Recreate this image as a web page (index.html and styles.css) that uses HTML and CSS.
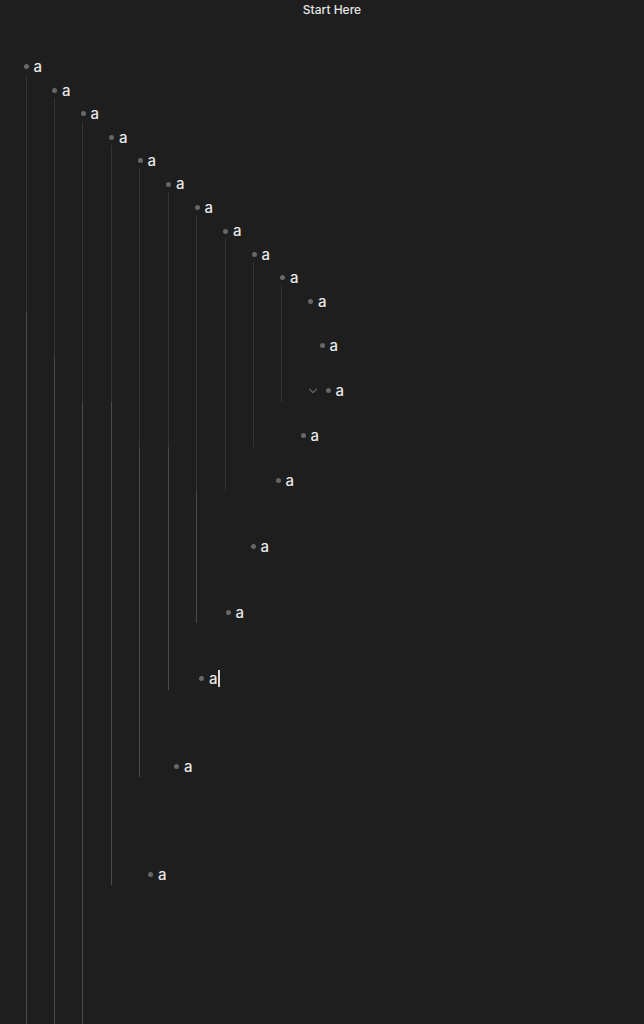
FILE: index.html
```html
<!DOCTYPE html>
<html lang="en">
<head>
<meta charset="utf-8">
<title>Start Here</title>
<link rel="stylesheet" href="styles.css">
</head>
<body>
<header class="titlebar"><span class="title">Start Here</span></header>
<main class="outline">
  <div class="guides">
    <div class="guide" style="--top:55px;--len:1100px;--split:237px"></div>
    <div class="guide" style="--top:78px;--len:1100px;--split:259px"></div>
    <div class="guide" style="--top:102px;--len:1100px;--split:280px"></div>
    <div class="guide" style="--top:125px;--len:740px;--split:257px"></div>
    <div class="guide" style="--top:148px;--len:609px;--split:279px"></div>
    <div class="guide" style="--top:172px;--len:498px;--split:255px"></div>
    <div class="guide" style="--top:195px;--len:408px;--split:276px"></div>
    <div class="guide" style="--top:218px;--len:253px;--split:253px"></div>
    <div class="guide" style="--top:242px;--len:185px;--split:185px"></div>
    <div class="guide" style="--top:265px;--len:117px;--split:117px"></div>
  </div>
  <div class="rows">
    <div class="row" style="--x:26px"><span class="bullet"></span><span class="text">a</span></div>
    <div class="row" style="--x:54.5px"><span class="bullet"></span><span class="text">a</span></div>
    <div class="row" style="--x:83px"><span class="bullet"></span><span class="text">a</span></div>
    <div class="row" style="--x:111.5px"><span class="bullet"></span><span class="text">a</span></div>
    <div class="row" style="--x:140px"><span class="bullet"></span><span class="text">a</span></div>
    <div class="row" style="--x:168.5px"><span class="bullet"></span><span class="text">a</span></div>
    <div class="row" style="--x:197px"><span class="bullet"></span><span class="text">a</span></div>
    <div class="row" style="--x:225.5px"><span class="bullet"></span><span class="text">a</span></div>
    <div class="row" style="--x:254px"><span class="bullet"></span><span class="text">a</span></div>
    <div class="row" style="--x:282.5px"><span class="bullet"></span><span class="text">a</span></div>
    <div class="row" style="--x:310.5px"><span class="bullet"></span><span class="text">a</span></div>
    <div class="row" style="--x:322px;--gap:21.05px"><span class="bullet"></span><span class="text">a</span></div>
    <div class="row" style="--x:328px;--gap:21.55px"><svg class="chevron" viewBox="0 0 10 10" width="10" height="10"><path d="M1.5 3.2 L5 6.7 L8.5 3.2" fill="none" stroke="#6b6b6b" stroke-width="1.2" stroke-linecap="round" stroke-linejoin="round"/></svg><span class="bullet"></span><span class="text">a</span></div>
    <div class="row" style="--x:303px;--gap:21.55px"><span class="bullet"></span><span class="text">a</span></div>
    <div class="row" style="--x:278px;--gap:21.55px"><span class="bullet"></span><span class="text">a</span></div>
    <div class="row" style="--x:253px;--gap:42.55px"><span class="bullet"></span><span class="text">a</span></div>
    <div class="row" style="--x:228px;--gap:42.55px"><span class="bullet"></span><span class="text">a</span></div>
    <div class="row" style="--x:201.5px;--gap:42.55px"><span class="bullet"></span><span class="text">a</span><span class="cursor"></span></div>
    <div class="row" style="--x:176.5px;--gap:64.55px"><span class="bullet"></span><span class="text">a</span></div>
    <div class="row" style="--x:150.5px;--gap:84.55px"><span class="bullet"></span><span class="text">a</span></div>
    <div class="row" style="--x:126px;--gap:132.55px"><span class="bullet"></span><span class="text">a</span></div>
  </div>
</main>
</body>
</html>
```
FILE: styles.css
```css
html, body {
  margin: 0;
  padding: 0;
  height: 100%;
  background: #1e1e1e;
  overflow: hidden;
}

body {
  font-family: Inter, "Noto Sans", sans-serif;
  color: #dadada;
}

.titlebar {
  height: 20px;
  display: flex;
  align-items: center;
  justify-content: center;
  padding-left: 20px;
}

.title {
  font-size: 12px;
  line-height: 20px;
  font-weight: 500;
  color: #e4e4e4;
}

.outline {
  display: grid;
}

.guides,
.rows {
  grid-area: 1 / 1;
}

.guides {
  display: flex;
  align-items: flex-start;
  gap: 27.45px;
  padding-left: 25.5px;
}

.guide {
  width: 1px;
  margin-top: var(--top);
  height: var(--len);
  background: linear-gradient(to bottom, #343434 var(--split), #4b4b4b var(--split));
}

.rows {
  display: flex;
  flex-direction: column;
  padding-top: 35.275px;
}

.row {
  height: 23.45px;
  margin-top: var(--gap, 0px);
  padding-left: calc(var(--x) - 2.5px);
  display: flex;
  align-items: center;
  font-size: 15px;
  line-height: 23.45px;
}

.bullet {
  width: 5px;
  height: 5px;
  border-radius: 50%;
  background: #676767;
  flex: none;
}

.text {
  margin-left: 5px;
  color: #e8e8e8;
  font-weight: 500;
}

.chevron {
  flex: none;
  margin-left: -17.5px;
  margin-right: 7.5px;
}

.cursor {
  width: 1.5px;
  height: 17px;
  background: #d8d8d8;
  margin-left: 0.5px;
}
```
